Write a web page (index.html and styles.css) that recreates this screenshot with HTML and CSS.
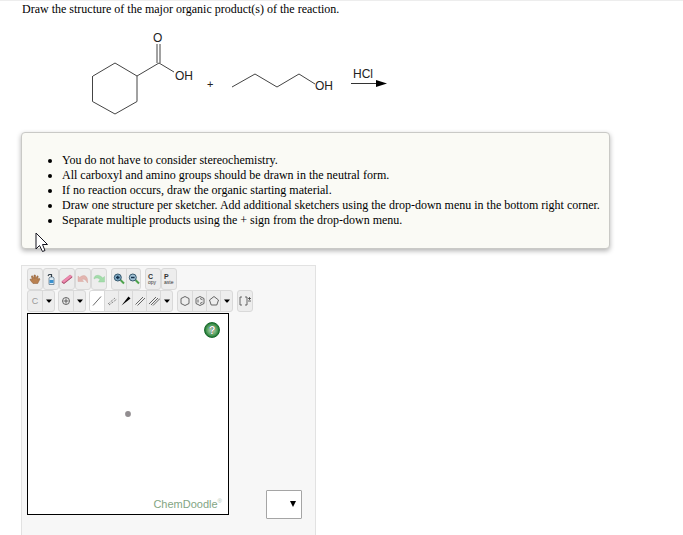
FILE: index.html
```html
<!DOCTYPE html>
<html lang="en">
<head>
<meta charset="utf-8">
<title>Organic reaction question</title>
<link rel="stylesheet" href="styles.css">
</head>
<body>
<main class="page">
  <p class="prompt">Draw the structure of the major organic product(s) of the reaction.</p>

  <svg class="reaction" width="400" height="115" viewBox="0 0 400 115" role="img" aria-label="Reaction scheme">
    <g class="bonds">
      <path d="M93 59L115 46L137 59V84.500L115 97L92.500 84.500V59"/>
      <path d="M137 59L159 46L174 55M157 46V27M160 46V27"/>
      <path d="M232 70L255 57L277 70L299 57L315 67"/>
    </g>
    <path class="arrow-line" d="M351 66.500H378"/>
    <path class="ink" d="M376 63L387 66.500L376 70Z"/>
    <g class="atoms">
      <text x="153" y="25">O</text>
      <text x="175" y="63">OH</text>
      <text x="315" y="73">OH</text>
      <text x="353" y="61">HCl</text>
      <text class="plus" x="207" y="71">+</text>
    </g>
  </svg>

  <section class="notes">
    <ul>
      <li>You do not have to consider stereochemistry.</li>
      <li>All carboxyl and amino groups should be drawn in the neutral form.</li>
      <li>If no reaction occurs, draw the organic starting material.</li>
      <li>Draw one structure per sketcher. Add additional sketchers using the drop-down menu in the bottom right corner.</li>
      <li>Separate multiple products using the + sign from the drop-down menu.</li>
    </ul>
    <svg class="pointer" width="14" height="21" viewBox="0 0 14 21" aria-hidden="true">
      <path d="M1 1V17L4.500 13.500L7.500 19.500L10 18.500L7.500 12.500H12.500Z" fill="#fff" stroke="#15151f"/>
    </svg>
  </section>

  <section class="sketcher">
    <div class="toolbar">
      <div class="group">
        <button aria-label="Move"><svg viewBox="0 0 12 12"><path d="M4 10.500L1.500 7.500L1 6L3 6.800L2.500 3L3.500 2.800L5 5.500L5 2L6.300 2L7 5.300L8.300 2.800L9.200 3.200L8.700 6.300L10.200 5.300L11 6L8.700 10.500Z" fill="#b98050" stroke="#8a5a34" stroke-width=".5"/></svg></button>
      </div>
      <div class="group">
        <button aria-label="Clear"><svg viewBox="0 0 12 12"><path d="M4 5L5 4H8L9 5V11.500H4Z" fill="#dbeaf4" stroke="#516b80" stroke-width=".7"/><path d="M4.500 7H8.500V10H4.500Z" fill="#3c92cf"/><path d="M6.500 4V1.500H4L3 3" fill="none" stroke="#34414b" stroke-width="1.200"/></svg></button>
      </div>
      <div class="group">
        <button aria-label="Erase"><svg viewBox="0 0 12 12"><path d="M.8 8.500L9 2L11.200 3.500L3 10Z" fill="#f08ab0" stroke="#d0668d" stroke-width=".6"/><path d="M.8 8.500L3 10L11.200 3.500V4.500L3 11L.8 9.500Z" fill="#a94365"/></svg></button>
      </div>
      <div class="group">
        <button disabled aria-label="Undo"><svg viewBox="0 0 12 12"><path d="M1 8.500V3L2.800 4.500C6 1 11.500 2 10.500 10C9 7 7.500 5.500 5 6.500L6.500 8.500Z" fill="#e3b5b0" stroke="#d3a19b" stroke-width=".4"/></svg></button>
      </div>
      <div class="group wide-gap">
        <button disabled aria-label="Redo"><svg viewBox="0 0 12 12"><path d="M11.500 9V3.500L9.700 5C6.500 1 1 1.500 1 6C3 4.500 5 4.500 7 6.500L5.500 9Z" fill="#a3dcaa" stroke="#8bcb94" stroke-width=".4"/></svg></button>
      </div>
      <div class="group wide-gap">
        <button aria-label="Zoom in"><svg viewBox="0 0 12 12"><path d="M7.500 7L11 10.500" stroke="#4da34b" stroke-width="2"/><circle cx="4.800" cy="4.500" r="3.500" fill="#82adc7" stroke="#35576d"/><path d="M3 4.500H6.600M4.800 2.700V6.300" stroke="#102e4a" stroke-width="1.300"/></svg></button><button aria-label="Zoom out"><svg viewBox="0 0 12 12"><path d="M7.500 7L11 10.500" stroke="#4da34b" stroke-width="2"/><circle cx="4.800" cy="4.500" r="3.500" fill="#a2c3d7" stroke="#35576d"/><path d="M3 4.500H6.600" stroke="#102e4a" stroke-width="1.300"/></svg></button>
      </div>
      <div class="group">
        <button class="word"><b>C</b><span>opy</span></button>
      </div>
      <div class="group">
        <button class="word"><b>P</b><span>aste</span></button>
      </div>
    </div>

    <div class="toolbar">
      <div class="group spaced">
        <button class="element" aria-label="Carbon">C</button><button class="more" aria-label="More elements"><svg viewBox="0 0 8 8"><path d="M1 2.500H7L4.500 5.500H3.500Z"/></svg></button>
      </div>
      <div class="group spaced">
        <button aria-label="Increase charge"><svg viewBox="0 0 12 12"><g class="line"><circle cx="6" cy="6" r="3.500"/><path d="M3.500 6H8.500M6 3.500V8.500"/></g></svg></button><button class="more" aria-label="More charges"><svg viewBox="0 0 8 8"><path d="M1 2.500H7L4.500 5.500H3.500Z"/></svg></button>
      </div>
      <div class="group wide-gap">
        <button class="active" aria-label="Single bond"><svg viewBox="0 0 12 12"><path class="line" d="M2 10.500L10 1.500"/></svg></button><button aria-label="Recessed bond"><svg viewBox="0 0 12 12"><path class="line" stroke-dasharray="1 1" d="M2 9L9 3M3 10L11 4"/></svg></button><button aria-label="Protruding bond"><svg viewBox="0 0 12 12"><path class="ink" d="M1.500 10.500L8.500 1.500L10.500 3.500Z"/></svg></button><button aria-label="Double bond"><svg viewBox="0 0 12 12"><path class="line" d="M1.500 9.500L9 2M3.500 10.500L11 3"/></svg></button><button aria-label="Triple bond"><svg viewBox="0 0 12 12"><path class="line" d="M1 9L8 2M3 10L10 3M5 10.500L12 3.500"/></svg></button><button class="more" aria-label="More bonds"><svg viewBox="0 0 8 8"><path d="M1 2.500H7L4.500 5.500H3.500Z"/></svg></button>
      </div>
      <div class="group wide-gap">
        <button aria-label="Cyclohexane ring"><svg viewBox="0 0 12 12"><path class="line" d="M6 1.500L10 3.500V8.500L6 10.500L2 8.500V3.500Z"/></svg></button><button aria-label="Benzene ring"><svg viewBox="0 0 12 12"><path class="line" d="M6 1.500L10 3.500V8.500L6 10.500L2 8.500V3.500ZM6 3.500L8.500 4.800M8.500 7.200L6 8.500M4 4.500V7.500"/></svg></button><button aria-label="Cyclopentane ring"><svg viewBox="0 0 12 12"><path class="line" d="M6 1.500L10.500 5L8.800 10H3.200L1.500 5Z"/></svg></button><button class="more" aria-label="More rings"><svg viewBox="0 0 8 8"><path d="M1 2.500H7L4.500 5.500H3.500Z"/></svg></button>
      </div>
      <div class="group">
        <button aria-label="Charge brackets"><svg viewBox="0 0 12 12"><path class="line" d="M3 2H1V10H3M6 2H8V10H6M9 3.500H12M10.500 2V5M9 6H12"/></svg></button>
      </div>
    </div>

    <div class="workspace">
      <div class="canvas">
        <button class="help" aria-label="Help">?</button>
        <svg class="atom" width="6" height="6" viewBox="0 0 6 6" aria-hidden="true"><circle cx="3" cy="3" r="2.900" fill="#928d90"/></svg>
        <span class="brand">ChemDoodle<sup>®</sup></span>
      </div>
      <div class="picker">
        <select aria-label="Add sketcher"><option></option></select>
        <svg width="6" height="6" viewBox="0 0 6 6" aria-hidden="true"><path d="M0 0H6L3 6Z"/></svg>
      </div>
    </div>
  </section>
</main>
</body>
</html>
```
FILE: styles.css
```css
* { box-sizing: border-box; }

body {
  margin: 0;
  background: #fff;
  color: #000;
  font: 12px/15px "Liberation Serif", "Times New Roman", serif;
}

.page {
  display: flex;
  flex-direction: column;
  align-items: flex-start;
  min-height: 100vh;
  border-top: 1px solid #ededed;
}

.prompt { margin: 0 0 0 22px; padding-top: 1px; }

.reaction { display: block; max-width: 100%; }
.bonds path { fill: none; stroke: #444; stroke-width: 1; }
.arrow-line { stroke: #333; }
.ink { fill: #000; }
.atoms { font: 12px "Liberation Sans", Arial, sans-serif; fill: #222; }
.plus { font-size: 11px; }

.notes {
  position: relative;
  width: calc(100% - 40px);
  max-width: 589px;
  margin-left: 21px;
  padding: 20px 0;
  border: 1px solid #c9c9c6;
  border-radius: 4px;
  background: #fafaf5;
  box-shadow: 0 2px 5px rgba(0, 0, 0, .3);
}
.notes ul { margin: 0; padding: 0 0 0 40px; }
.pointer { position: absolute; left: 13px; bottom: -5px; }

.sketcher {
  flex: 1;
  width: 295px;
  margin: 16px 0 0 21px;
  padding: 2px 5px 0;
  border: 1px solid #e2e2e2;
  border-bottom: 0;
  background: #f7f7f7;
}

.toolbar { display: flex; }

.group {
  display: flex;
  overflow: hidden;
  border: 1px solid #d9d9d9;
  border-radius: 3px;
  background: #ededed;
}
.wide-gap { margin-right: 4px; }
.spaced { margin-right: 3px; }

button { font-family: "Liberation Sans", Arial, sans-serif; }

.group button {
  display: flex;
  align-items: center;
  justify-content: center;
  width: 14px;
  height: 20px;
  padding: 0;
  border: 0;
  background: none;
}
.group button + button { border-left: 1px solid #d9d9d9; }
.group button svg { width: 12px; height: 12px; flex: none; }
.group .more { width: 12px; }
.group .more svg { width: 8px; height: 8px; }
.group .active { background: #fff; }
.group .element { font-size: 9px; color: #999; }
.group .word {
  flex-direction: column;
  align-items: flex-start;
  padding-left: 2px;
  font-size: 5px;
  line-height: 5px;
  color: #333;
}
.word b { font-size: 7px; line-height: 6px; }
.line { fill: none; stroke: #444; stroke-width: .8; }

.workspace { display: flex; align-items: flex-end; gap: 37px; margin-top: 1px; }

.canvas {
  display: grid;
  position: relative;
  width: 202px;
  height: 202px;
  place-items: center;
  border: 1px solid #000;
  background: #fff;
}
.help {
  position: absolute;
  top: 8px;
  right: 8px;
  width: 16px;
  height: 16px;
  padding: 0;
  border: 1px solid #176a2b;
  border-radius: 50%;
  background: radial-gradient(circle, #b9d8bb 10%, #4b9c57 55%, #176a2b 75%);
  color: #fff;
  font-size: 11px;
  font-weight: bold;
  line-height: 14px;
  text-shadow: 0 0 1px #000;
}
.brand {
  position: absolute;
  right: 6px;
  bottom: 3px;
  color: #83a583;
  font: 11px/14px "Liberation Sans", Arial, sans-serif;
}
.brand sup { font-size: 6px; line-height: 1px; color: #adc0ad; }

.picker { display: grid; position: relative; margin-bottom: -4px; }
.picker select {
  width: 36px;
  height: 29px;
  appearance: none;
  border: 1px solid #a5a5a5;
  border-radius: 1px;
  background: #fff;
}
.picker svg { position: absolute; right: 6px; top: 11px; pointer-events: none; }
```
